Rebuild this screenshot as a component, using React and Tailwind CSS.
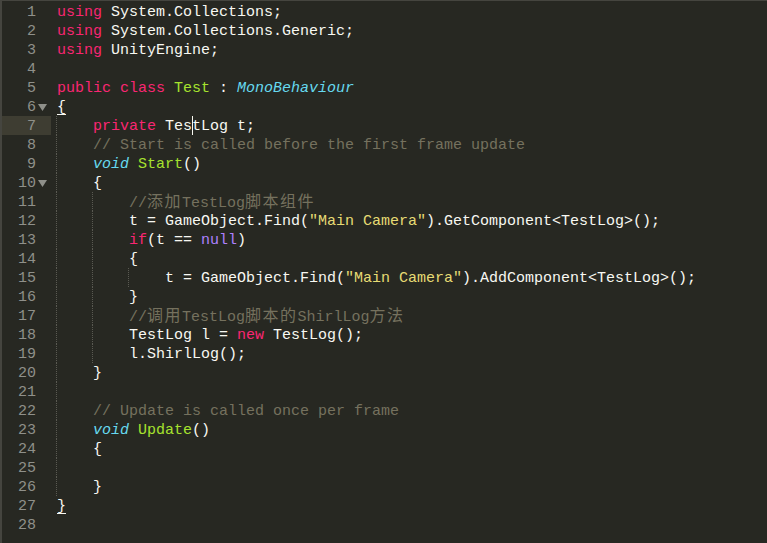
const kw = "text-[#f92672]";
const fn = "text-[#a6e22e]";
const ty = "text-[#66d9ef] italic";
const str = "text-[#e6db74]";
const cm = "text-[#75715e]";
const num = "text-[#ae81ff]";

// [guides, tokens, flag]  token: [text, className]
const lines = [
  [0, [["using", kw], [" System.Collections;"]]],
  [0, [["using", kw], [" System.Collections.Generic;"]]],
  [0, [["using", kw], [" UnityEngine;"]]],
  [0, []],
  [0, [["public", kw], [" "], ["class", kw], [" "], ["Test", fn], [" : "], ["MonoBehaviour", ty]]],
  [0, [["{", "match"]], "fold"],
  [1, [["private", kw], [" Tes"], ["", "cursor"], ["tLog t;"]], "active"],
  [1, [["// Start is called before the first frame update", cm]]],
  [1, [["void", ty], [" "], ["Start", fn], ["()"]]],
  [1, [["{"]], "fold"],
  [2, [["//", cm], ["添加", cm + " cjk"], ["TestLog", cm], ["脚本组件", cm + " cjk"]]],
  [2, [["t = GameObject.Find("], ["\"Main Camera\"", str], [").GetComponent<TestLog>();"]]],
  [2, [["if", kw], ["(t == "], ["null", num], [")"]]],
  [2, [["{"]]],
  [3, [["t = GameObject.Find("], ["\"Main Camera\"", str], [").AddComponent<TestLog>();"]]],
  [2, [["}"]]],
  [2, [["//", cm], ["调用", cm + " cjk"], ["TestLog", cm], ["脚本的", cm + " cjk"], ["ShirlLog", cm], ["方法", cm + " cjk"]]],
  [2, [["TestLog l = "], ["new", kw], [" TestLog();"]]],
  [2, [["l.ShirlLog();"]]],
  [1, [["}"]]],
  [1, []],
  [1, [["// Update is called once per frame", cm]]],
  [1, [["void", ty], [" "], ["Update", fn], ["()"]]],
  [1, [["{"]]],
  [1, []],
  [1, [["}"]]],
  [0, [["}", "match"]]],
  [0, []],
];

function Token({ text, cls }) {
  if (cls === "cursor") {
    return (
      <span className="relative inline-block w-0 h-[16px] align-top">
        <span className="absolute left-0 -top-[3px] w-px h-[19px] bg-[#f8f8f0]" />
      </span>
    );
  }
  if (cls === "match") {
    return <span className="underline decoration-1 underline-offset-[3px] decoration-[#f8f8f2]">{text}</span>;
  }
  if (cls && cls.endsWith(" cjk")) {
    return (
      <span className={cls.replace(" cjk", "") + " text-[16px] tracking-[1.5px]"}>{text}</span>
    );
  }
  return <span className={cls}>{text}</span>;
}

export default function App() {
  return (
    <div
      className="w-[767px] h-[543px] overflow-hidden bg-[#272822] border-l-2 border-t border-[#45453f] pt-px text-[15px] leading-[16px] text-[#f8f8f2]"
      style={{ fontFamily: '"Liberation Mono", "Noto Sans CJK SC", monospace' }}
    >
      {lines.map(([guides, tokens, flag], i) => (
        <div key={i} className="flex h-[19px]">
          <div className={"flex w-[49px] shrink-0 " + (flag === "active" ? "bg-[#3e3d32]" : "")}>
            <span className="w-[34px] pt-[3px] text-right text-[#8f908a]">{i + 1}</span>
            {flag === "fold" ? (
              <svg width="9" height="7" viewBox="0 0 9 7" className="ml-[2px] mt-[7px]">
                <path d="M0 0 H9 L4.5 7 Z" fill="#8f908a" />
              </svg>
            ) : null}
          </div>
          <div className="ml-[6px] flex whitespace-pre">
            {Array.from({ length: guides }).map((_, g) => (
              <span key={g} className="inline-block w-[36px] h-[19px] border-l border-dotted border-[#5a5a52] -ml-px mr-px" />
            ))}
            <span className="pt-[3px]">
              {tokens.map(([t, c], j) => (
                <Token key={j} text={t} cls={c} />
              ))}
            </span>
          </div>
        </div>
      ))}
    </div>
  );
}
